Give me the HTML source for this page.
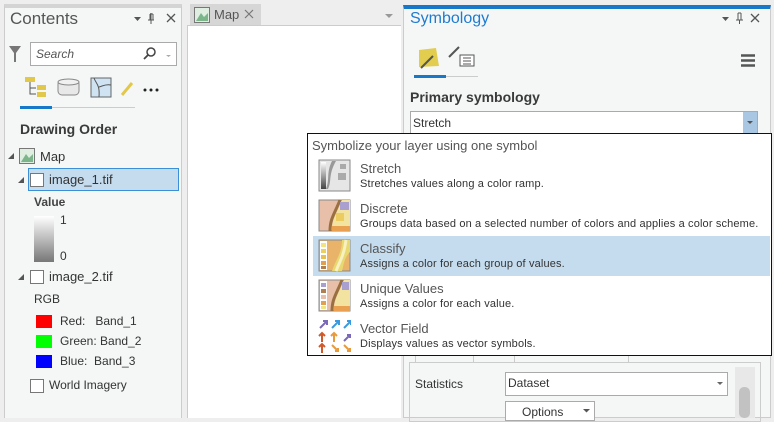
<!DOCTYPE html>
<html><head><meta charset="utf-8"><style>
*{margin:0;padding:0;box-sizing:border-box}
body{width:774px;height:418px;overflow:hidden;background:#eeeeee;font-family:"Liberation Sans",sans-serif;position:relative;color:#333}
.a{position:absolute}
.t{position:absolute;white-space:nowrap}
</style></head><body>
<!-- left panel -->
<div class="a" style="left:4px;top:4px;width:178px;height:414px;background:#f5f7f7;border-left:1px solid #ccc;border-right:1px solid #ccc;border-top:4px solid #d4d4d4"></div>
<div class="t" style="left:10px;top:9px;font-size:17px;color:#555">Contents</div>
<svg class="a" style="left:130px;top:10px" width="48" height="16"><path d="M4 7h7l-3.5 4z" fill="#555"/><path d="M21 3v7M18 10h6M20 4h3M20 4v6M23 4v6M21 10v4" stroke="#555" fill="none"/><path d="M37 4l8 8M45 4l-8 8" stroke="#555" stroke-width="1.3"/></svg>
<svg class="a" style="left:8px;top:45px" width="14" height="18"><path d="M1 1h12L8 8v9H6V8z" fill="#777"/></svg>
<div class="a" style="left:30px;top:42px;width:147px;height:24px;background:#fff;border:1px solid #aaa"></div>
<div class="t" style="left:36px;top:47px;font-size:12px;font-style:italic;color:#555">Search</div>
<svg class="a" style="left:142px;top:46px" width="32" height="16"><circle cx="9" cy="6" r="4" stroke="#444" fill="none" stroke-width="1.5"/><path d="M6 9l-4 4" stroke="#444" stroke-width="1.8"/><path d="M24 9h5l-2.5 2z" fill="#aaa"/></svg>
<svg class="a" style="left:22px;top:75px" width="140" height="24"><rect x="3" y="2" width="10" height="5" fill="#e2c84a"/><path d="M8 7v12h6M8 13h6" stroke="#555" fill="none"/><rect x="15" y="10" width="9" height="5" fill="#e2c84a"/><rect x="15" y="17" width="9" height="5" fill="#e2c84a"/><rect x="36" y="5" width="21" height="15" rx="4" fill="#e8e8e8" stroke="#888"/><ellipse cx="46.5" cy="7" rx="10.5" ry="3" fill="#f0f0f0" stroke="#888"/><rect x="69" y="3" width="20" height="19" fill="#cfe3f3" stroke="#666"/><path d="M72 3c2 6 6 6 5 19M77 12c4-1 6-3 12-2" stroke="#555" fill="none"/><path d="M100 20l10-12" stroke="#e2c84a" stroke-width="3"/><circle cx="123" cy="15" r="1.5" fill="#222"/><circle cx="129" cy="15" r="1.5" fill="#222"/><circle cx="135" cy="15" r="1.5" fill="#222"/></svg>
<div class="a" style="left:20px;top:106px;width:32px;height:3px;background:#1777c9"></div>
<div class="a" style="left:52px;top:107px;width:83px;height:1px;background:#ccc"></div>
<div class="t" style="left:20px;top:121px;font-size:14px;font-weight:bold;color:#3a3a3a">Drawing Order</div>
<svg class="a" style="left:8px;top:152px" width="8" height="8"><path d="M6 1v6H0z" fill="#555"/></svg>
<svg class="a" style="left:19px;top:148px" width="16" height="16"><rect x=".5" y=".5" width="15" height="15" fill="#dfeee0" stroke="#777"/><path d="M2 14l5-8 3 4 4-4v8z" fill="#7cb58a"/></svg>
<div class="t" style="left:40px;top:149px;font-size:13px">Map</div>
<div class="a" style="left:28px;top:168px;width:151px;height:23px;background:#c5dcef;border:1px solid #3a8fd6"></div>
<svg class="a" style="left:18px;top:176px" width="8" height="8"><path d="M6 1v6H0z" fill="#555"/></svg>
<div class="a" style="left:30px;top:173px;width:14px;height:14px;background:#fff;border:1px solid #777"></div>
<div class="t" style="left:49px;top:172px;font-size:13px">image_1.tif</div>
<div class="t" style="left:34px;top:195px;font-size:12px;font-weight:bold;color:#444">Value</div>
<div class="a" style="left:34px;top:216px;width:20px;height:46px;background:linear-gradient(#fff,#777)"></div>
<div class="t" style="left:60px;top:213px;font-size:12px">1</div>
<div class="t" style="left:60px;top:249px;font-size:12px">0</div>
<svg class="a" style="left:18px;top:273px" width="8" height="8"><path d="M6 1v6H0z" fill="#555"/></svg>
<div class="a" style="left:30px;top:270px;width:14px;height:14px;background:#fff;border:1px solid #777"></div>
<div class="t" style="left:49px;top:269px;font-size:13px">image_2.tif</div>
<div class="t" style="left:34px;top:292px;font-size:12px">RGB</div>
<div class="a" style="left:36px;top:315px;width:16px;height:13px;background:#f00"></div>
<div class="t" style="left:60px;top:314px;font-size:12px">Red:&nbsp;&nbsp; Band_1</div>
<div class="a" style="left:36px;top:335px;width:16px;height:13px;background:#0f0"></div>
<div class="t" style="left:60px;top:334px;font-size:12px">Green: Band_2</div>
<div class="a" style="left:36px;top:355px;width:16px;height:13px;background:#00f"></div>
<div class="t" style="left:60px;top:354px;font-size:12px">Blue:&nbsp; Band_3</div>
<div class="a" style="left:30px;top:379px;width:14px;height:14px;background:#fff;border:1px solid #777"></div>
<div class="t" style="left:49px;top:378px;font-size:12px">World Imagery</div>
<!-- map -->
<div class="a" style="left:187px;top:25px;width:214px;height:393px;background:#fff;border-left:1px solid #ccc;border-top:1px solid #ccc"></div>
<div class="a" style="left:190px;top:4px;width:71px;height:21px;background:#d6d6d6"></div>
<svg class="a" style="left:194px;top:7px" width="16" height="16"><rect x=".5" y=".5" width="15" height="15" fill="#dfeee0" stroke="#777"/><path d="M2 14l5-8 3 4 4-4v8z" fill="#7cb58a"/></svg>
<div class="t" style="left:214px;top:7px;font-size:13px;color:#555">Map</div>
<svg class="a" style="left:244px;top:9px" width="10" height="10"><path d="M1 1l8 8M9 1l-8 8" stroke="#777" stroke-width="1.2"/></svg>
<svg class="a" style="left:385px;top:14px" width="8" height="5"><path d="M0 0h8l-4 4z" fill="#999"/></svg>
<!-- symbology -->
<div class="a" style="left:403px;top:5px;width:368px;height:413px;background:#f5f7f7;border:1px solid #ccc;border-top:4px solid #1777c9"></div>
<div class="t" style="left:410px;top:10px;font-size:16px;color:#1e7bd0">Symbology</div>
<svg class="a" style="left:718px;top:10px" width="48" height="16"><path d="M4 7h7l-3.5 4z" fill="#555"/><path d="M20 3h3M20 3v7M23 3v7M18 10h7M21.5 10v4" stroke="#555" fill="none"/><path d="M33 4l8 8M41 4l-8 8" stroke="#555" stroke-width="1.3"/></svg>
<svg class="a" style="left:416px;top:44px" width="62" height="28"><path d="M3 6l17-2 3 18-20 1z" fill="#e2cd4e"/><path d="M5 24l12-12" stroke="#555" stroke-width="2"/><path d="M33 13l10-10" stroke="#555" stroke-width="2"/><rect x="44" y="11" width="14" height="11" fill="#fff" stroke="#555"/><path d="M47 14h8M47 17h8M47 20h8" stroke="#555"/></svg>
<div class="a" style="left:414px;top:75px;width:32px;height:3px;background:#1777c9"></div>
<div class="a" style="left:446px;top:76px;width:32px;height:1px;background:#ccc"></div>
<svg class="a" style="left:741px;top:54px" width="14" height="13"><path d="M0 1.5h14M0 6.5h14M0 11.5h14" stroke="#555" stroke-width="2.5"/></svg>
<div class="t" style="left:410px;top:89px;font-size:14px;font-weight:bold;color:#3a3a3a">Primary symbology</div>
<div class="a" style="left:410px;top:111px;width:348px;height:23px;background:#fff;border:1px solid #aaa"></div>
<div class="a" style="left:743px;top:112px;width:14px;height:21px;background:#a9c7e2"></div>
<svg class="a" style="left:747px;top:121px" width="6" height="4"><path d="M0 0h6l-3 3z" fill="#555"/></svg>
<div class="t" style="left:413px;top:116px;font-size:12px">Stretch</div>
<!-- below popup -->
<div class="a" style="left:409px;top:362px;width:352px;height:60px;border:1px solid #ccc"></div>
<div class="a" style="left:415px;top:350px;width:214px;height:13px;border:1px solid #ccc;border-bottom:none"></div>
<div class="a" style="left:473px;top:350px;width:1px;height:12px;background:#ccc"></div>
<div class="a" style="left:514px;top:350px;width:1px;height:12px;background:#ccc"></div>
<div class="t" style="left:415px;top:377px;font-size:12px">Statistics</div>
<div class="a" style="left:505px;top:372px;width:223px;height:24px;background:#fff;border:1px solid #aaa"></div>
<div class="t" style="left:508px;top:376px;font-size:12px">Dataset</div>
<svg class="a" style="left:717px;top:382px" width="6" height="4"><path d="M0 0h6l-3 3z" fill="#666"/></svg>
<div class="a" style="left:505px;top:401px;width:90px;height:20px;background:#fff;border:1px solid #aaa"></div>
<div class="t" style="left:522px;top:405px;font-size:12px">Options</div>
<svg class="a" style="left:583px;top:409px" width="7" height="4"><path d="M0 0h7l-3.5 3.5z" fill="#555"/></svg>
<div class="a" style="left:735px;top:367px;width:20px;height:51px;background:#e8e8e8"></div>
<div class="a" style="left:739px;top:387px;width:11px;height:31px;background:#c2c2c2;border-radius:5px"></div>
<!-- popup -->
<div class="a" style="left:307px;top:133px;width:465px;height:223px;background:#fff;border:1px solid #111"></div>
<div class="t" style="left:312px;top:138px;font-size:13px;color:#555">Symbolize your layer using one symbol</div>
<div class="a" style="left:313px;top:236px;width:457px;height:40px;background:#c5dcef"></div>
<!-- icons -->
<svg class="a" style="left:318px;top:159px" width="33" height="33"><defs><linearGradient id="g" x1="0" y1="0" x2="0" y2="1"><stop offset="0" stop-color="#fff"/><stop offset="1" stop-color="#444"/></linearGradient></defs><rect x="1" y="1" width="31" height="31" fill="#e6e6e6" stroke="#888"/><rect x="3" y="3" width="5" height="27" fill="url(#g)"/><path d="M10 30c4-8 0-14 8-28h-4c-6 12-2 18-6 28z" fill="#999"/><rect x="22" y="5" width="6" height="5" fill="#aaa"/><rect x="20" y="14" width="8" height="7" fill="#aaa"/></svg>
<svg class="a" style="left:318px;top:199px" width="33" height="33"><rect x="1" y="1" width="31" height="31" fill="#e8bfa8" stroke="#888"/><path d="M14 32c0-12 4-16 10-31h8v31z" fill="#f3e3a0"/><path d="M12 32c0-12 4-16 10-31" stroke="#9a7040" stroke-width="3" fill="none"/><rect x="22" y="3" width="9" height="8" fill="#a9a0d0"/><rect x="18" y="14" width="8" height="8" fill="#eccc60"/><path d="M14 27h18v5H14z" fill="#e9a050"/></svg>
<svg class="a" style="left:318px;top:239px" width="33" height="33"><rect x="1" y="1" width="31" height="31" fill="#e9b36a" stroke="#888"/><rect x="2" y="2" width="7" height="29" fill="#fff"/><rect x="3" y="4" width="5" height="4" fill="#f2e580"/><rect x="3" y="10" width="5" height="4" fill="#ead060"/><rect x="3" y="16" width="5" height="4" fill="#e6c050"/><rect x="3" y="22" width="5" height="4" fill="#e0a050"/><rect x="3" y="27" width="5" height="3" fill="#b08050"/><path d="M14 32c4-12 10-18 10-31h8v12c-6 6-6 12-8 19z" fill="#e8d870"/><path d="M18 32c4-10 8-16 10-31" stroke="#f7f0c0" stroke-width="3" fill="none"/></svg>
<svg class="a" style="left:318px;top:279px" width="33" height="33"><rect x="1" y="1" width="31" height="31" fill="#e8bfa8" stroke="#888"/><rect x="2" y="2" width="7" height="29" fill="#fff"/><rect x="3" y="4" width="5" height="4" fill="#a9a0d0"/><rect x="3" y="10" width="5" height="4" fill="#b08050"/><rect x="3" y="16" width="5" height="4" fill="#e8bfa8"/><rect x="3" y="22" width="5" height="4" fill="#e0a050"/><rect x="3" y="27" width="5" height="3" fill="#f2e580"/><path d="M16 32c0-12 4-16 10-31h6v31z" fill="#f3e3a0"/><path d="M14 32c0-12 4-16 10-31" stroke="#9a7040" stroke-width="3" fill="none"/><rect x="24" y="3" width="7" height="8" fill="#a9a0d0"/><path d="M16 27h16v5H16z" fill="#e9a050"/></svg>
<svg class="a" style="left:317px;top:318px" width="34" height="36"><g stroke-width="2" fill="none"><path d="M3 10l7-7M6 3h4v4" stroke="#7a68b8"/><path d="M15 10l7-7M18 3h4v4" stroke="#3a9ae0"/><path d="M27 10l7-7M30 3h4v4" stroke="#3a9ae0"/><path d="M5 24v-9M2 18l3-3 3 3" stroke="#d05a2a"/><path d="M17 24v-9M14 18l3-3 3 3" stroke="#e99a3a"/><path d="M27 23l6-6M30 17h3v3" stroke="#7a68b8"/><path d="M5 35v-9M2 29l3-3 3 3" stroke="#d05a2a"/><path d="M15 27l6 6M21 30v3h-3" stroke="#e99a3a"/><path d="M27 27l6 6M33 30v3h-3" stroke="#e99a3a"/></g></svg>
<div class="t" style="left:360px;top:161px;font-size:13px;color:#555">Stretch</div>
<div class="t" style="left:360px;top:178px;font-size:11px;color:#333;letter-spacing:.15px">Stretches values along a color ramp.</div>
<div class="t" style="left:360px;top:201px;font-size:13px;color:#555">Discrete</div>
<div class="t" style="left:360px;top:218px;font-size:11px;color:#333;letter-spacing:.15px">Groups data based on a selected number of colors and applies a color scheme.</div>
<div class="t" style="left:360px;top:241px;font-size:13px;color:#555">Classify</div>
<div class="t" style="left:360px;top:258px;font-size:11px;color:#333;letter-spacing:.15px">Assigns a color for each group of values.</div>
<div class="t" style="left:360px;top:281px;font-size:13px;color:#555">Unique Values</div>
<div class="t" style="left:360px;top:298px;font-size:11px;color:#333;letter-spacing:.15px">Assigns a color for each value.</div>
<div class="t" style="left:360px;top:321px;font-size:13px;color:#555">Vector Field</div>
<div class="t" style="left:360px;top:338px;font-size:11px;color:#333;letter-spacing:.15px">Displays values as vector symbols.</div>
</body></html>
